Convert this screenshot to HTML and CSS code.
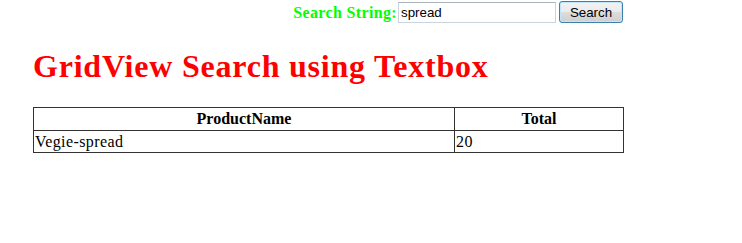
FILE: index.html
```html
<!DOCTYPE html>
<html>
<head>
<meta charset="utf-8">
<title>GridView Search</title>
<link rel="stylesheet" href="styles.css">
</head>
<body>
<div class="page">
  <div class="search-row">
    <span class="search-label">Search String:</span><input class="search-input" type="text" value="spread"><button class="search-btn" type="button">Search</button>
  </div>
  <h1 class="title">GridView Search using Textbox</h1>
  <table class="grid">
    <thead>
      <tr class="grid-head"><th class="col-name">ProductName</th><th class="col-total">Total</th></tr>
    </thead>
    <tbody>
      <tr class="grid-row"><td>Vegie-spread</td><td>20</td></tr>
    </tbody>
  </table>
</div>
</body>
</html>
```

FILE: styles.css
```css
html, body {
  margin: 0;
  padding: 0;
  background: #ffffff;
}
body {
  font-family: "Liberation Serif", "Times New Roman", serif;
  font-size: 16px;
  color: #000;
}
.page {
  width: 590px;
  margin-left: 33px;
  padding-top: 1px;
}
.search-row {
  display: flex;
  justify-content: flex-end;
  align-items: center;
  height: 22px;
}
.search-label {
  color: #00ff00;
  font-weight: bold;
  font-size: 16px;
  letter-spacing: 0.35px;
  margin-right: 1px;
  line-height: 18px;
  padding-top: 1px;
}
.search-input {
  box-sizing: border-box;
  width: 158px;
  height: 21px;
  margin: 1px 0 0 0;
  padding: 1px 2px;
  border: 1px solid #c9d4e0;
  border-top-color: #abb3bf;
  font-family: "Liberation Sans", Arial, sans-serif;
  font-size: 13.33px;
  color: #000;
  background: #fff;
  outline: none;
}
.search-btn {
  box-sizing: border-box;
  width: 64px;
  height: 22px;
  margin: 0 0 0 3px;
  padding: 0;
  border: 1px solid #3c7fb1;
  border-radius: 3px;
  background: linear-gradient(#f2f2f2 0%, #ebebeb 50%, #dddddd 51%, #cfcfcf 100%);
  box-shadow: inset 0 0 0 1px #c0e6f9;
  font-family: "Liberation Sans", Arial, sans-serif;
  font-size: 13.33px;
  color: #000;
}
.title {
  margin: 25px 0 23px 0;
  font-size: 32px;
  font-weight: bold;
  letter-spacing: 0.78px;
  color: #ff0000;
  line-height: 36px;
}
.grid {
  width: 591px;
  border-collapse: collapse;
  border: 1px solid #333;
}
.grid th, .grid td {
  border: 1px solid #333;
  padding: 0 1px;
  letter-spacing: 0.4px;
}
.grid-head th {
  height: 22px;
  font-weight: bold;
  text-align: center;
  letter-spacing: 0;
}
.col-name {
  width: 418px;
}
.grid-row td {
  height: 21px;
  text-align: left;
}
```
